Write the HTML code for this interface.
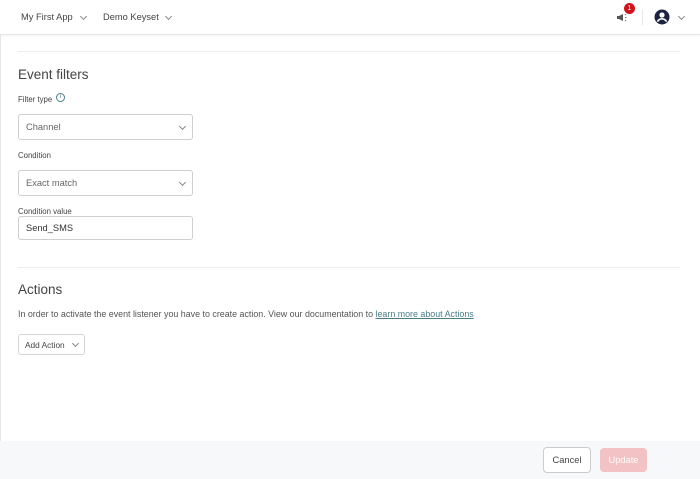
<!DOCTYPE html><html><head><style>
body{margin:0;width:700px;height:479px;overflow:hidden;background:#fff;font-family:"Liberation Sans",sans-serif;color:#333;position:relative}
.a{position:absolute}
.hdr{left:0;top:0;width:700px;height:34px;border-bottom:1px solid #e6e6e6;box-shadow:0 1px 3px rgba(0,0,0,.05)}
.t{font-size:9.3px;color:#444}
.chev{width:4px;height:4px;border-right:1px solid #888;border-bottom:1px solid #888;transform:rotate(45deg)}
.box{left:18px;width:173px;height:24px;border:1px solid #cfcfcf;border-radius:3px;font-size:9.3px;color:#666}
.box span{position:absolute;left:7px;top:7px}
.lbl{left:18px;font-size:7.8px;color:#444}
</style></head><body>
<div class="a" style="left:0;top:35px;width:1px;height:406px;background:#e6e6e6"></div>
<div class="a hdr"></div>
<div class="a t" style="left:21px;top:12px">My First App</div><div class="a chev" style="left:81px;top:14px"></div>
<div class="a t" style="left:103px;top:12px">Demo Keyset</div><div class="a chev" style="left:166px;top:14px"></div>
<svg class="a" style="left:616px;top:13px" width="11" height="9" viewBox="0 0 11 9"><path d="M1 3h2l4-2v7L3 6H1z" fill="#555"/><path d="M9 2l1-1M9 7l1 1M9 4.5h1.5" stroke="#555" stroke-width=".8"/></svg>
<div class="a" style="left:624px;top:3px;width:11px;height:11px;border-radius:50%;background:#d0131a;color:#fff;font-size:7px;text-align:center;line-height:11px">1</div>
<div class="a" style="left:642px;top:9px;width:1px;height:16px;background:#e6e6e6"></div>
<svg class="a" style="left:654px;top:9px" width="16" height="16" viewBox="0 0 16 16"><circle cx="8" cy="8" r="7.5" fill="#1d2440"/><circle cx="8" cy="6" r="2.6" fill="#fff"/><path d="M3.4 12.6c1.2-2 2.7-2.8 4.6-2.8s3.4.8 4.6 2.8" stroke="#fff" stroke-width="1.6" fill="none"/></svg>
<div class="a chev" style="left:679px;top:14px"></div>
<div class="a" style="left:18px;top:51px;width:662px;height:1px;background:#eee"></div>
<div class="a" style="left:18px;top:67px;font-size:13.5px;color:#444">Event filters</div>
<div class="a lbl" style="top:95px">Filter type</div>
<div class="a" style="left:56px;top:93px;width:7px;height:7px;border:1px solid #4a7d88;border-radius:50%;font-size:6px;color:#4a7d88;text-align:center;line-height:7px">i</div>
<div class="a box" style="top:114px"><span>Channel</span><div class="a chev" style="left:161px;top:9px"></div></div>
<div class="a lbl" style="top:151px">Condition</div>
<div class="a box" style="top:170px"><span>Exact match</span><div class="a chev" style="left:161px;top:9px"></div></div>
<div class="a lbl" style="top:207px">Condition value</div>
<div class="a box" style="top:216px;height:22px;color:#333"><span style="top:6px">Send_SMS</span></div>
<div class="a" style="left:18px;top:267px;width:662px;height:1px;background:#eee"></div>
<div class="a" style="left:18px;top:282px;font-size:13.5px;color:#444">Actions</div>
<div class="a" style="left:18px;top:309px;font-size:8.9px;color:#555">In order to activate the event listener you have to create action. View our documentation to <span style="color:#4a7d88;text-decoration:underline">learn more about Actions</span></div>
<div class="a" style="left:18px;top:334px;width:65px;height:19px;border:1px solid #d6d6d6;border-radius:3px;font-size:8.3px;color:#444"><span class="a" style="left:6px;top:5px">Add Action</span><div class="a chev" style="left:54px;top:6px"></div></div>
<div class="a" style="left:0;top:441px;width:700px;height:38px;background:#f7f8fa"></div>
<div class="a" style="left:543px;top:447px;width:46px;height:24px;border:1px solid #ccc;border-radius:4px;background:#fff;font-size:9.3px;color:#444;text-align:center;line-height:24px">Cancel</div>
<div class="a" style="left:600px;top:448px;width:47px;height:24px;border-radius:4px;background:#f2c2c4;font-size:9.3px;color:#fff;text-align:center;line-height:24px">Update</div>
</body></html>
